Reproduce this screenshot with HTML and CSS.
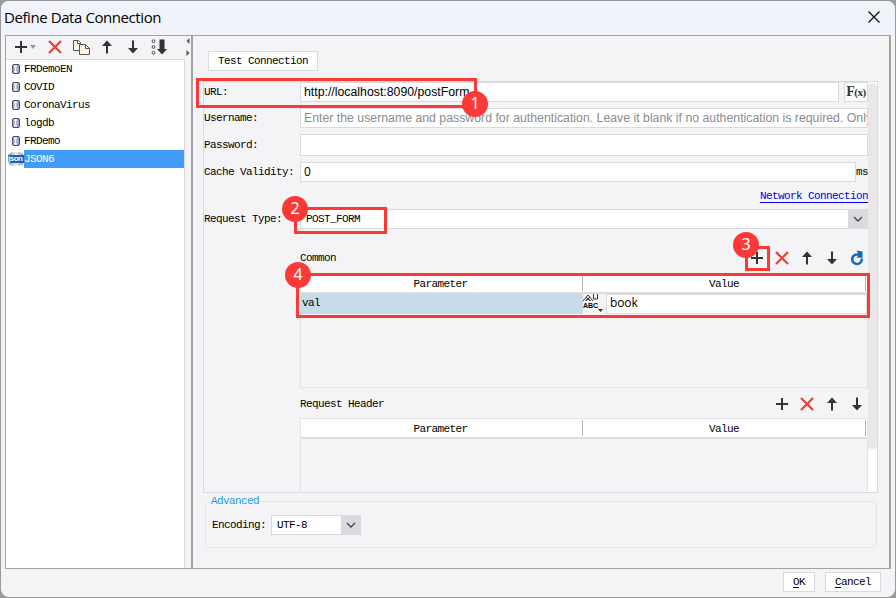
FILE: index.html
```
<!DOCTYPE html>
<html lang="en">
<head>
    <meta charset="UTF-8">
    <meta name="viewport" content="width=device-width, initial-scale=1.0">
    <title>Define Data Connection</title>
    <link rel="stylesheet" href="styles.css">
</head>
<body>
    <svg class="defs" width="0" height="0">
        <symbol id="plus" viewBox="0 0 16 16"><path d="M8 2v12M2 8h12" stroke="#333" stroke-width="2" fill="none"/></symbol>
        <symbol id="cross" viewBox="0 0 16 16"><path d="M2 2l12 12M14 2L2 14" stroke="#e8453c" stroke-width="2.3" fill="none"/></symbol>
        <symbol id="up" viewBox="0 0 16 16"><path d="M8 1.5l5 5.5H9v7.5H7V7H3z" fill="#333"/></symbol>
        <symbol id="down" viewBox="0 0 16 16"><path d="M8 14.5L13 9H9V1.500H7V9H3z" fill="#333"/></symbol>
        <symbol id="chevron" viewBox="0 0 10 6"><path d="M1 1l4 4 4-4" stroke="#444" stroke-width="1.300" fill="none"/></symbol>
        <symbol id="db" viewBox="0 0 8 10"><rect x=".5" y=".5" width="7" height="9" rx="1.500" fill="#a3a7c8" stroke="#4a4a5e"/><path d="M2 2h3M2 8h3M3.500 2v6" stroke="#f4f5ff" stroke-width="1.600"/></symbol>
    </svg>

    <div class="window">
        <div class="titlebar">
            <h1>Define Data Connection</h1>
            <svg class="close" width="12" height="12" viewBox="0 0 12 12"><path d="M.5.5l11 11M11.500.5l-11 11" stroke="#111" stroke-width="1.300"/></svg>
        </div>

        <div class="main">
            <div class="sidebar">
                <div class="toolbar">
                    <svg width="16" height="16"><use href="#plus"/></svg>
                    <svg class="caret" width="6" height="4" viewBox="0 0 6 4"><path d="M0 0h6L3 4z" fill="#999"/></svg>
                    <svg class="cross" width="16" height="16"><use href="#cross"/></svg>
                    <svg class="copy" width="17" height="17" viewBox="0 0 17 17">
                        <path d="M.5 1.500h5l2 2v8h-7z" fill="#fff6e0" stroke="#555"/>
                        <path d="M6.500 5.500h6l4 4v6h-10z" fill="#fff6e0" stroke="#555"/>
                        <path d="M4.500 1.500v3h3M12.500 5.500v4h4" fill="none" stroke="#555"/>
                    </svg>
                    <svg class="arrow" width="16" height="16"><use href="#up"/></svg>
                    <svg class="arrow" width="16" height="16"><use href="#down"/></svg>
                    <svg class="sort" width="16" height="16" viewBox="0 0 16 16">
                        <g fill="#fff" stroke="#444"><circle cx="2.500" cy="2.200" r="1.400"/><circle cx="2.500" cy="8" r="1.400"/><circle cx="2.500" cy="13.800" r="1.400"/></g>
                        <path d="M8.500.5h5V10H16L11 15.500 6 10h2.500z" fill="#333"/>
                    </svg>
                </div>
                <ul class="list">
                    <li><svg width="8" height="10"><use href="#db"/></svg>FRDemoEN</li>
                    <li><svg width="8" height="10"><use href="#db"/></svg>COVID</li>
                    <li><svg width="8" height="10"><use href="#db"/></svg>CoronaVirus</li>
                    <li><svg width="8" height="10"><use href="#db"/></svg>logdb</li>
                    <li><svg width="8" height="10"><use href="#db"/></svg>FRDemo</li>
                    <li class="selected"><span class="json-icon"><b>json</b></span><span class="name">JSON6</span></li>
                </ul>
            </div>

            <div class="divider">
                <svg width="4" height="18" viewBox="0 0 4 18"><path d="M3.500 0v6L.5 3zM.5 12v6l3-3z" fill="#555"/></svg>
            </div>

            <div class="content">
                <div class="button test">Test Connection</div>

                <div class="scrollpane">
                    <div class="form">
                        <div class="row">
                            <label>URL:</label>
                            <div class="input sans url">http://localhost:8090/postForm</div>
                            <div class="fx"><b>F</b><span>(x)</span></div>
                        </div>
                        <div class="row">
                            <label>Username:</label>
                            <div class="input sans placeholder">Enter the username and password for authentication. Leave it blank if no authentication is required. Only</div>
                        </div>
                        <div class="row tall">
                            <label>Password:</label>
                            <div class="input"></div>
                        </div>
                        <div class="row">
                            <label>Cache Validity:</label>
                            <div class="input segoe">0</div>
                            <span class="unit">ms</span>
                        </div>
                        <div class="link-row"><a class="link">Network Connection</a></div>
                        <div class="row">
                            <label>Request Type:</label>
                            <div class="select">
                                <span>POST_FORM</span>
                                <div class="drop"><svg width="10" height="6"><use href="#chevron"/></svg></div>
                            </div>
                        </div>

                        <div class="section">
                            <div class="section-head common">
                                <span>Common</span>
                                <div class="actions">
                                    <svg width="16" height="16"><use href="#plus"/></svg>
                                    <svg width="16" height="16"><use href="#cross"/></svg>
                                    <svg width="16" height="16"><use href="#up"/></svg>
                                    <svg width="16" height="16"><use href="#down"/></svg>
                                    <svg width="16" height="16" viewBox="0 0 16 16"><path d="M12.700 8.500A4.800 4.800 0 1 1 8 4.400h2" stroke="#1268b3" stroke-width="2.500" fill="none"/><path d="M7.500.5l6 1v6.300H7.500L10 5z" fill="#1268b3"/></svg>
                                </div>
                            </div>
                            <div class="table">
                                <div class="thead"><span>Parameter</span><span>Value</span></div>
                                <div class="trow">
                                    <div class="cell">val</div>
                                    <div class="type">
                                        <svg width="16" height="8" viewBox="0 0 16 8"><path d="M0 7l5-6 5 6M2.500 7L5 4l2.500 3M3 3l4 4M7 3L3 7M10.500 0v5h4V0" stroke="#333" fill="none"/></svg>
                                        <b>ABC</b>
                                        <svg class="type-caret" width="5" height="3" viewBox="0 0 5 3"><path d="M0 0h5L2.500 3z" fill="#333"/></svg>
                                    </div>
                                    <div class="editor">book</div>
                                </div>
                            </div>

                            <div class="section-head header">
                                <span>Request Header</span>
                                <div class="actions">
                                    <svg width="16" height="16"><use href="#plus"/></svg>
                                    <svg width="16" height="16"><use href="#cross"/></svg>
                                    <svg width="16" height="16"><use href="#up"/></svg>
                                    <svg width="16" height="16"><use href="#down"/></svg>
                                </div>
                            </div>
                            <div class="table last">
                                <div class="thead"><span>Parameter</span><span>Value</span></div>
                            </div>
                        </div>
                    </div>
                    <div class="scrollbar"><div class="thumb"></div></div>
                </div>

                <fieldset class="advanced">
                    <legend>Advanced</legend>
                    <label>Encoding:</label>
                    <div class="select">
                        <span>UTF-8</span>
                        <div class="drop"><svg width="10" height="6"><use href="#chevron"/></svg></div>
                    </div>
                </fieldset>
            </div>
        </div>

        <div class="footer">
            <div class="button"><span><u>O</u>K</span></div>
            <div class="button cancel"><span><u>C</u>ancel</span></div>
        </div>
    </div>

    <!-- numbered step markers over the dialog -->
    <div class="mark mark-1"><i>1</i></div>
    <div class="mark mark-2"><i>2</i></div>
    <div class="mark mark-3"><i>3</i></div>
    <div class="mark mark-4"><i>4</i></div>
</body>
</html>
```
FILE: styles.css
```
* { margin: 0; padding: 0; box-sizing: border-box; }
body {
    width: 896px;
    height: 598px;
    overflow: hidden;
    padding: 1px;
    background: #9a9a9a;
    font-family: "Liberation Mono", monospace;
    font-size: 11px;
    letter-spacing: -0.6px;
    line-height: 14px;
    color: #000;
    white-space: nowrap;
}
svg { display: block; flex: none; }
.defs { position: absolute; }
.window {
    height: 596px;
    border-radius: 8px;
    background: #f4f4f7;
    overflow: hidden;
    display: flex;
    flex-direction: column;
}
.titlebar {
    height: 34px;
    flex: none;
    padding: 0 15px 3px 3px;
    background: #f1f3fa;
    display: flex;
    align-items: center;
    justify-content: space-between;
}
.titlebar h1 {
    font: 400 15px/24px "Open Sans", sans-serif;
    letter-spacing: -0.42px;
}
.main {
    height: 534px;
    flex: none;
    margin: 0 4px;
    border: 1px solid #a5a698;
    border-right-width: 2px;
    display: flex;
}

/* connection list */
.sidebar { width: 179px; display: flex; flex-direction: column; }
.toolbar {
    height: 23px;
    padding: 0 0 1px 7px;
    display: flex;
    align-items: center;
}
.caret { margin-left: 1px; }
.cross { margin-left: 11px; }
.copy { margin-left: 10px; }
.arrow { margin-left: 9px; }
.arrow + .arrow { margin-left: 10px; }
.sort { margin-left: 10px; }
.list {
    flex: 1;
    list-style: none;
    background: #fff;
    border-top: 1px solid #d9dadd;
    border-right: 1px solid #d9dadd;
}
.list li {
    height: 18px;
    padding-left: 6px;
    display: flex;
    align-items: center;
}
.list li svg { margin-right: 4px; }
.list .selected { padding-left: 2px; }
.json-icon {
    width: 16px;
    height: 14px;
    border-radius: 5px;
    background: linear-gradient(90deg, #999, #eee 50%, #999);
    display: flex;
    align-items: center;
}
.json-icon b {
    width: 16px;
    height: 8px;
    background: #1b5faf;
    color: #fff;
    font: bold 8px/7px "Liberation Sans", sans-serif;
    letter-spacing: -0.5px;
}
.selected .name {
    flex: 1;
    background: #419bf9;
    color: #fff;
    line-height: 18px;
}
.divider {
    width: 8px;
    padding: 2px 0 0 1px;
    border-right: 2px solid #a3a3a7;
}

/* right side */
.content {
    flex: 1;
    min-width: 0;
    padding: 15px 11px 0 10px;
}
.button {
    height: 20px;
    border: 1px solid #d9dadd;
    background: #fff;
    display: flex;
    align-items: center;
    justify-content: center;
}
.test { width: 110px; margin-left: 5px; }
.scrollpane {
    height: 412px;
    margin-top: 10px;
    border: 1px solid #d9dadd;
    display: flex;
}
.form { flex: 1; min-width: 0; overflow: hidden; }
.row {
    height: 20px;
    margin-bottom: 6px;
    display: flex;
    align-items: center;
}
.row.tall { height: 22px; }
.row label { width: 96px; flex: none; }
.input, .select {
    flex: 1;
    height: 100%;
    min-width: 0;
    border: 1px solid #d9dadd;
    background: #fff;
    display: flex;
    align-items: center;
    overflow: hidden;
}
.input { padding-left: 3px; }
.sans { font: 12.3px/18px "Liberation Sans", sans-serif; letter-spacing: 0; }
.segoe { font: 12px/18px "Open Sans", sans-serif; letter-spacing: 0; }
.placeholder { color: #8c8c8c; }
.fx {
    width: 24px;
    height: 20px;
    margin-left: 5px;
    border: 1px solid #d9dadd;
    background: #fff;
    display: flex;
    align-items: center;
    justify-content: center;
    font: bold 14px/18px "Liberation Serif", serif;
    letter-spacing: -0.5px;
    color: #333;
}
.fx span { font-size: 11px; }
.unit { width: 12px; }
.link-row {
    height: 21px;
    padding-top: 1px;
    display: flex;
    justify-content: flex-end;
}
.link {
    height: 14px;
    color: #0000e0;
    border-bottom: 1px solid #0000e0;
}
.select span { flex: 1; padding-left: 5px; }
.drop {
    width: 19px;
    height: 100%;
    background: #d9dadd;
    display: flex;
    align-items: center;
    justify-content: center;
}
.section { margin-left: 96px; }
.section-head {
    display: flex;
    align-items: center;
    justify-content: space-between;
}
.common { height: 38px; padding-top: 8px; }
.header { height: 30px; padding-top: 2px; }
.actions {
    display: flex;
    gap: 9px;
    padding-right: 3px;
}
.table { height: 115px; border: 1px solid #e4e4e7; }
.table.last { border-bottom: 0; }
.thead {
    height: 20px;
    padding-bottom: 2px;
    background: #fff;
    border-bottom: 2px solid #dcdcdf;
    display: grid;
    grid-template-columns: 282px 283px;
    text-align: center;
    line-height: 20px;
}
.thead span { height: 16px; margin-top: 1px; border-right: 1px solid #b8b4a8; line-height: 18px; }
.thead span:first-child { padding-right: 2px; }
.trow { height: 20px; display: flex; }
.cell {
    width: 282px;
    padding-left: 1px;
    background: #c8dbe8;
    line-height: 18px;
}
.type {
    width: 23px;
    position: relative;
    background: #f4f4f7;
}
.type b {
    display: block;
    font: bold 7px/7px "Liberation Sans", sans-serif;
    letter-spacing: 0;
}
.type-caret { position: absolute; right: 3px; bottom: 2px; }
.editor {
    flex: 1;
    padding-left: 3px;
    border: 1px solid #d9dadd;
    background: #fff;
    font: 12px/16px "Open Sans", sans-serif;
    letter-spacing: -0.1px;
}
.scrollbar { width: 9px; padding: 1px 0; background: #fff; }
.thumb { height: 366px; border-radius: 4px; background: #e8e8e8; }
.advanced {
    height: 54px;
    margin: 1px 1px 0 2px;
    padding-left: 6px;
    border: 1px solid #e6e6e9;
    border-radius: 5px;
    display: flex;
}
.advanced legend {
    margin-left: -1px;
    color: #1e9bd7;
}
.advanced label { width: 59px; margin-top: 10px; }
.advanced .select { flex: none; width: 90px; height: 20px; margin-top: 7px; }

.footer {
    flex: 1;
    padding: 3px 14px 0 0;
    display: flex;
    justify-content: flex-end;
    gap: 10px;
}
.footer .button { width: 32px; }
.footer .cancel { width: 56px; }
.footer u { text-underline-offset: 2px; }

/* step markers */
.mark {
    position: absolute;
    border: 3px solid #fb3a37;
}
.mark i {
    position: absolute;
    width: 26px;
    height: 26px;
    border-radius: 50%;
    background: #fb3a37;
    color: #fff;
    font: 400 16px/25px "Noto Sans", sans-serif;
    letter-spacing: 0;
    text-align: center;
}
.mark-1 { left: 196px; top: 78px; width: 281px; height: 30px; }
.mark-1 i { right: -14px; bottom: -12px; }
.mark-2 { left: 294px; top: 207px; width: 93px; height: 27px; }
.mark-2 i { left: -15px; top: -14px; }
.mark-3 { left: 745px; top: 246px; width: 25px; height: 25px; }
.mark-3 i { left: -15px; top: -17px; }
.mark-4 { left: 296px; top: 273px; width: 574px; height: 45px; }
.mark-4 i { left: -14px; top: -14px; }
```
